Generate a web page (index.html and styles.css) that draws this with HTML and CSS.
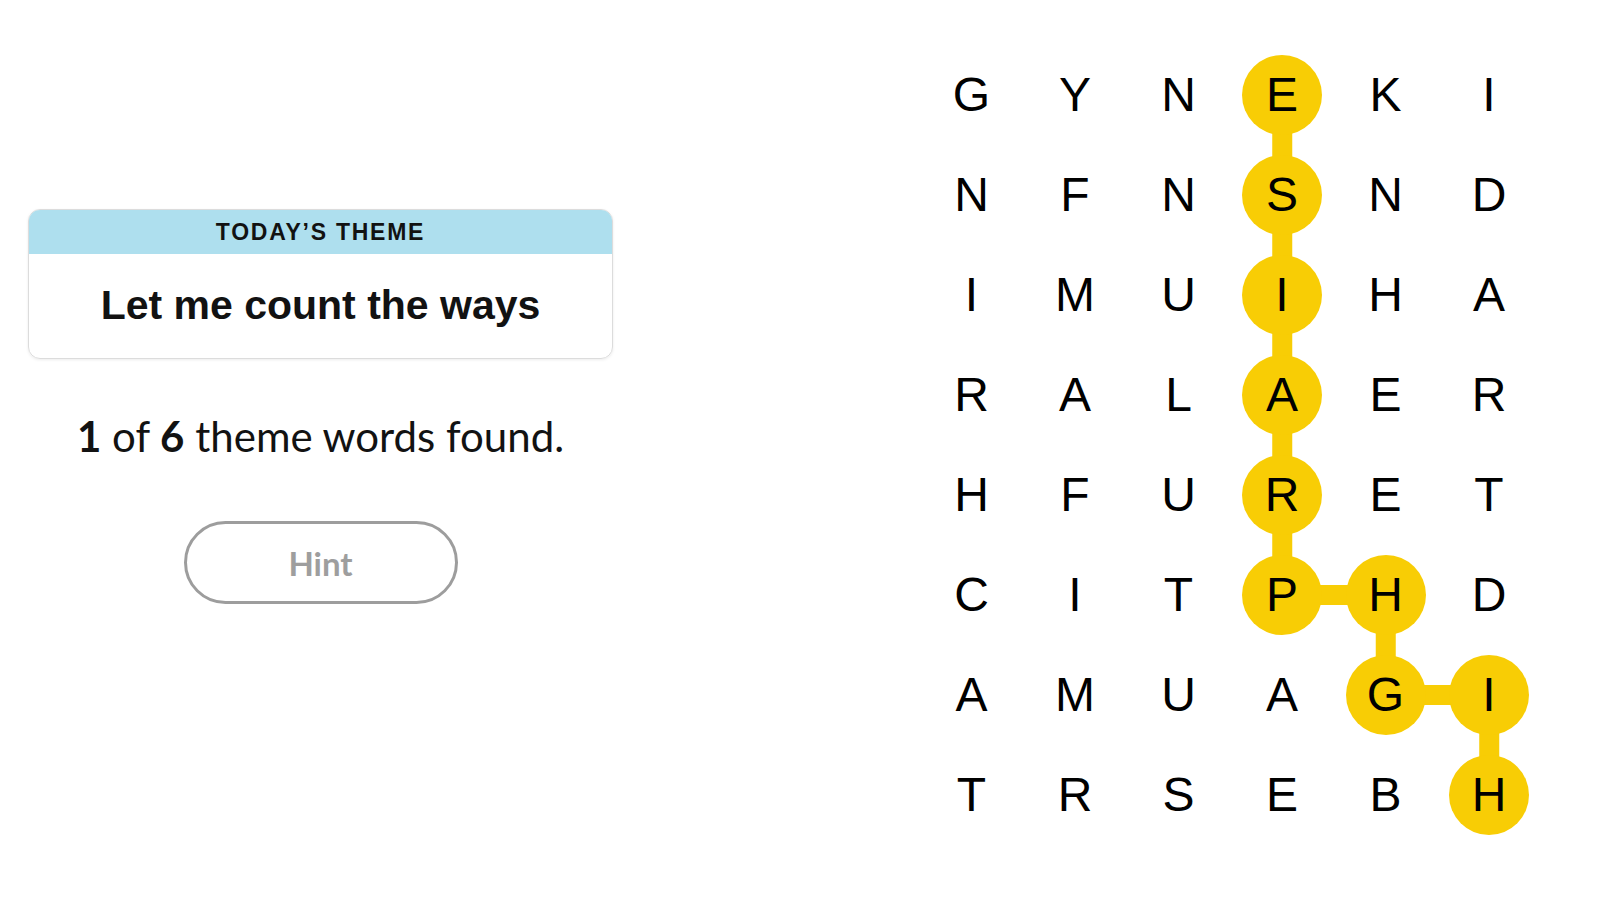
FILE: index.html
```html
<!DOCTYPE html>
<html lang="en">
<head>
<meta charset="utf-8">
<title>Strands</title>
<link rel="stylesheet" href="styles.css">
</head>
<body>
<main class="page">
  <section class="left">
    <div class="theme-card">
      <div class="theme-head">TODAY’S THEME</div>
      <div class="theme-body">Let me count the ways</div>
    </div>
    <p class="found"><b>1</b> of <b>6</b> theme words found.</p>
    <button class="hint">Hint</button>
  </section>
  <section class="board">
    <svg class="links" width="621" height="800" viewBox="0 0 621 800" aria-hidden="true">
      <polyline points="362.25,50 362.25,550 465.75,550 465.75,650 569.25,650 569.25,750" fill="none" stroke="#f8cd05" stroke-width="20"/>
    </svg>
    <div class="grid">
      <span class="cell">G</span><span class="cell">Y</span><span class="cell">N</span><span class="cell sel">E</span><span class="cell">K</span><span class="cell">I</span>
      <span class="cell">N</span><span class="cell">F</span><span class="cell">N</span><span class="cell sel">S</span><span class="cell">N</span><span class="cell">D</span>
      <span class="cell">I</span><span class="cell">M</span><span class="cell">U</span><span class="cell sel">I</span><span class="cell">H</span><span class="cell">A</span>
      <span class="cell">R</span><span class="cell">A</span><span class="cell">L</span><span class="cell sel">A</span><span class="cell">E</span><span class="cell">R</span>
      <span class="cell">H</span><span class="cell">F</span><span class="cell">U</span><span class="cell sel">R</span><span class="cell">E</span><span class="cell">T</span>
      <span class="cell">C</span><span class="cell">I</span><span class="cell">T</span><span class="cell sel">P</span><span class="cell sel">H</span><span class="cell">D</span>
      <span class="cell">A</span><span class="cell">M</span><span class="cell">U</span><span class="cell">A</span><span class="cell sel">G</span><span class="cell sel">I</span>
      <span class="cell">T</span><span class="cell">R</span><span class="cell">S</span><span class="cell">E</span><span class="cell">B</span><span class="cell sel">H</span>
    </div>
  </section>
</main>
</body>
</html>
```

FILE: styles.css
```css
* { box-sizing: border-box; }
html, body { margin: 0; padding: 0; background: #ffffff; }
body { width: 1600px; height: 900px; overflow: hidden; }

.page {
  display: flex;
  align-items: flex-start;
  height: 900px;
}

.left {
  width: 585px;
  margin-left: 28px;
  padding-top: 209px;
  display: flex;
  flex-direction: column;
  align-items: center;
}

.theme-card {
  width: 100%;
  border: 1px solid #dcdcdc;
  border-radius: 12px;
  overflow: hidden;
  box-shadow: 0 1px 3px rgba(0,0,0,0.08);
}

.theme-head {
  height: 44px;
  background: #aedfee;
  display: flex;
  align-items: center;
  justify-content: center;
  font-family: "Liberation Sans", Arial, sans-serif;
  font-weight: 700;
  font-size: 23px;
  letter-spacing: 1.75px;
  color: #121212;
}

.theme-body {
  height: 104px;
  display: flex;
  align-items: center;
  justify-content: center;
  font-family: "Liberation Sans", Arial, sans-serif;
  font-weight: 700;
  font-size: 41px;
  color: #121212;
  padding-bottom: 2px;
}

.found {
  margin: 52px 0 0;
  font-family: Lato, "Noto Sans", sans-serif;
  font-size: 42px;
  line-height: 50px;
  color: #121212;
  font-weight: 400;
  text-align: center;
}
.found b { font-weight: 700; }

.hint {
  margin-top: 60px;
  width: 274px;
  height: 83px;
  border: 3px solid #9d9d9d;
  border-radius: 42px;
  background: #ffffff;
  font-family: Lato, "Noto Sans", sans-serif;
  font-weight: 700;
  font-size: 33px;
  color: #9e9e9e;
  padding: 0;
}

.board {
  position: relative;
  margin-left: 306.75px;
  margin-top: 45px;
  width: 621px;
  height: 800px;
}

.links {
  position: absolute;
  left: 0;
  top: 0;
}

.grid {
  position: relative;
  display: grid;
  grid-template-columns: repeat(6, 103.5px);
  grid-template-rows: repeat(8, 100px);
}

.cell {
  justify-self: center;
  align-self: center;
  width: 80px;
  height: 80px;
  border-radius: 50%;
  display: flex;
  align-items: center;
  justify-content: center;
  font-family: "Liberation Sans", Arial, sans-serif;
  font-size: 48px;
  line-height: 80px;
  color: #000000;
}

.cell.sel { background: #f8cd05; }
```
